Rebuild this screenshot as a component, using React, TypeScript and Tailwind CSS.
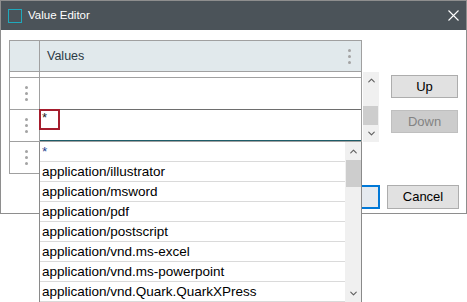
import { ChevronUp, ChevronDown } from 'lucide-react';

const items = [
  '*',
  'application/illustrator',
  'application/msword',
  'application/pdf',
  'application/postscript',
  'application/vnd.ms-excel',
  'application/vnd.ms-powerpoint',
  'application/vnd.Quark.QuarkXPress',
];

function Dots() {
  return (
    <div className="flex flex-col gap-[3px]">
      <span className="w-[3px] h-[3px] rounded-full bg-[#a3a3a3]" />
      <span className="w-[3px] h-[3px] rounded-full bg-[#a3a3a3]" />
      <span className="w-[3px] h-[3px] rounded-full bg-[#a3a3a3]" />
    </div>
  );
}

function Row({ h, children, last, edit }: { h: string; children?: React.ReactNode; last?: boolean; edit?: boolean }) {
  return (
    <div className={`flex ${h} ${last ? '' : 'border-b border-[#a0a0a0]'}`}>
      <div className="w-[30px] shrink-0 border-r border-[#a0a0a0] flex items-center justify-center pl-[3px]">
        {children}
      </div>
      <div className={`flex-1 ${edit ? 'border-t border-[#6e6e6e] border-b border-b-[#1e5c68] -mt-px' : ''}`} />
    </div>
  );
}

export default function App() {
  return (
    <div className="relative w-[467px] h-[302px] bg-white overflow-hidden font-['Liberation_Sans',Arial,sans-serif] text-black">
      <div className="w-[467px] h-[214px] border border-[#8e8e8e] flex flex-col">
        <div className="h-[29px] shrink-0 bg-[#4b5359] flex items-center pl-[7px] pr-[7px]">
          <div className="w-[14px] h-[14px] border border-[#1fa9bc]" />
          <span className="ml-[6px] text-white text-[11.5px]">Value Editor</span>
          <svg className="ml-auto" width="11" height="11" viewBox="0 0 11 11">
            <path d="M0.5 0.5 L10.5 10.5 M10.5 0.5 L0.5 10.5" stroke="#ffffff" strokeWidth="1.1" />
          </svg>
        </div>

        <div className="flex-1 flex flex-col">
          <div className="flex pl-[8px] pt-[10px]">
            <div className="w-[353px] h-[134px] border border-[#a0a0a0] flex flex-col">
              <div className="flex h-[31px] bg-[#e1e9ec] border-b border-[#a0a0a0]">
                <div className="w-[30px] border-r border-[#a0a0a0]" />
                <div className="flex-1 flex items-center pl-[7px] pr-[10px]">
                  <span className="text-[12.5px] text-[#2b3a44]">Values</span>
                  <div className="ml-auto">
                    <Dots />
                  </div>
                </div>
              </div>
              <Row h="h-[6px]" />
              <Row h="h-[32px]">
                <Dots />
              </Row>
              <Row h="h-[32px]" edit>
                <Dots />
              </Row>
              <Row h="h-[31px]" last>
                <Dots />
              </Row>
            </div>

            <div className="ml-px mt-[32px] w-[16px] h-[70px] bg-[#f0f0f0] flex flex-col items-center">
              <div className="h-[17px] flex items-center justify-center text-[#606060]">
                <ChevronUp size={11} strokeWidth={2.5} />
              </div>
              <div className="flex-1 w-full pt-[17px]">
                <div className="h-[19px] w-[15px] bg-[#cdcdcd]" />
              </div>
              <div className="h-[17px] flex items-center justify-center text-[#606060]">
                <ChevronDown size={11} strokeWidth={2.5} />
              </div>
            </div>

            <div className="ml-[12px] mt-[35px] flex flex-col gap-[12px]">
              <button className="w-[67px] h-[23px] bg-[#e1e1e1] border border-[#adadad] text-[13px] text-black">Up</button>
              <button className="w-[67px] h-[23px] bg-[#cccccc] border border-[#bfbfbf] text-[13px] text-[#838383]">Down</button>
            </div>
          </div>

          <div className="flex justify-end gap-[7px] pr-[7px] mt-[11px]">
            <button className="w-[72px] h-[24px] bg-[#e5eaef] border-2 border-[#0078d7] text-[13px]">OK</button>
            <button className="w-[72px] h-[24px] bg-[#e1e1e1] border border-[#adadad] text-[13px]">Cancel</button>
          </div>
        </div>
      </div>

      <div className="absolute left-[39px] top-[109px] w-[21px] h-[21px] border-2 border-[#a51d2d] flex items-start pl-[1px]">
        <span className="text-[13px] leading-[14px] text-[#222]">*</span>
      </div>

      <div className="absolute left-[39px] top-[142px] w-[323px] h-[160px] bg-white border-l border-r border-[#8a8a8a] flex overflow-hidden">
        <div className="flex-1 flex flex-col">
          {items.map((t, i) => (
            <div key={t} className="h-[20px] shrink-0 border-b border-[#dadada] flex items-center pl-[2px]">
              <span className={`text-[13.5px] leading-none ${i === 0 ? 'text-[#1d3f8f]' : 'text-black'}`}>{t}</span>
            </div>
          ))}
        </div>
        <div className="w-[16px] bg-[#f0f0f0] flex flex-col items-center">
          <div className="h-[18px] flex items-center justify-center text-[#606060]">
            <ChevronUp size={11} strokeWidth={2.5} />
          </div>
          <div className="h-[27px] w-[15px] bg-[#cdcdcd]" />
          <div className="flex-1" />
          <div className="h-[18px] flex items-center justify-center text-[#606060]">
            <ChevronDown size={11} strokeWidth={2.5} />
          </div>
        </div>
      </div>
    </div>
  );
}
